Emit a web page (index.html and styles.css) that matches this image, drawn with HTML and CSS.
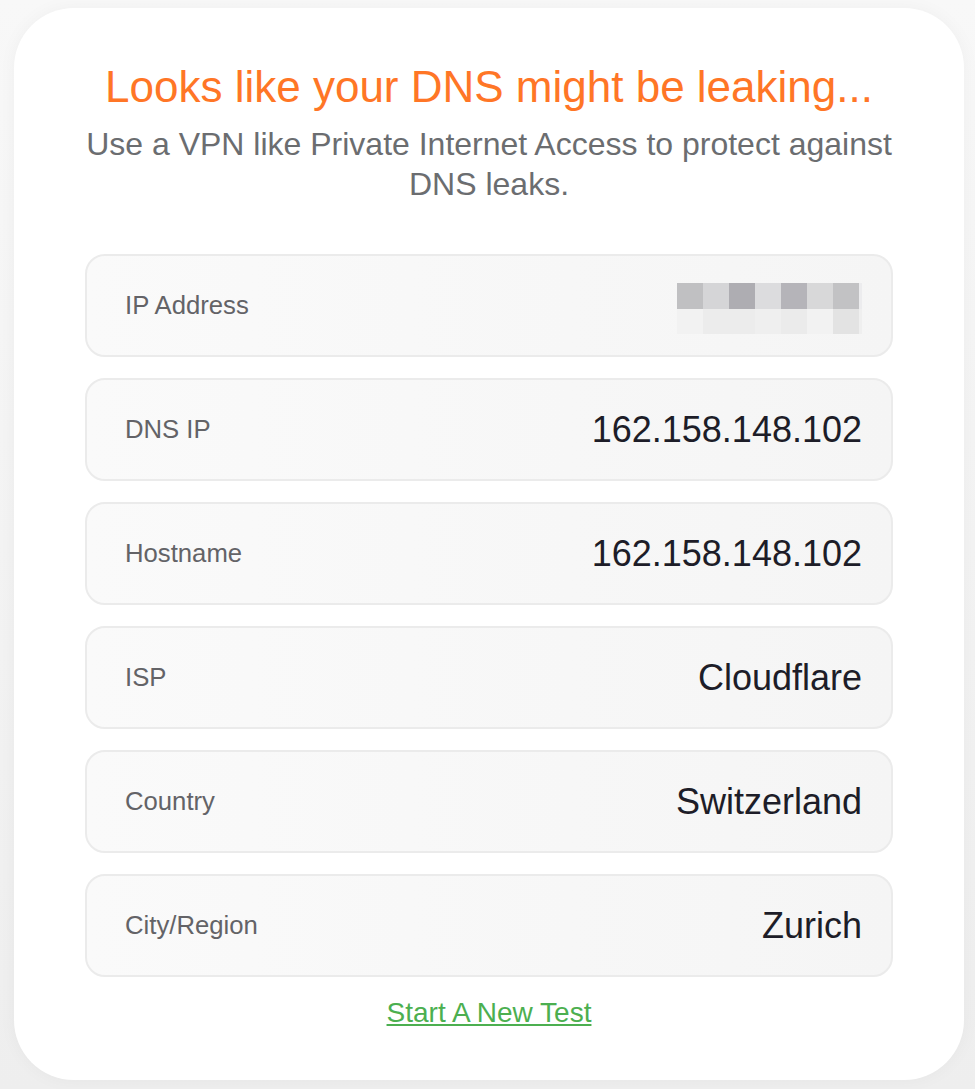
FILE: index.html
```html
<!DOCTYPE html>
<html lang="en">
<head>
<meta charset="utf-8">
<title>DNS Leak Test</title>
<link rel="stylesheet" href="styles.css">
</head>
<body>
<main class="card">
  <h1 class="title">Looks like your DNS might be leaking...</h1>
  <p class="subtitle">Use a VPN like Private Internet Access to protect against DNS leaks.</p>
  <div class="rows">
    <div class="row">
      <span class="label">IP Address</span>
      <div class="pixels" aria-label="hidden IP address">
        <span class="px"></span><span class="px"></span><span class="px"></span><span class="px"></span><span class="px"></span><span class="px"></span><span class="px"></span><span class="px"></span>
        <span class="px"></span><span class="px"></span><span class="px"></span><span class="px"></span><span class="px"></span><span class="px"></span><span class="px"></span><span class="px"></span>
      </div>
    </div>
    <div class="row">
      <span class="label">DNS IP</span>
      <span class="value">162.158.148.102</span>
    </div>
    <div class="row">
      <span class="label">Hostname</span>
      <span class="value">162.158.148.102</span>
    </div>
    <div class="row">
      <span class="label">ISP</span>
      <span class="value">Cloudflare</span>
    </div>
    <div class="row">
      <span class="label">Country</span>
      <span class="value">Switzerland</span>
    </div>
    <div class="row">
      <span class="label">City/Region</span>
      <span class="value">Zurich</span>
    </div>
  </div>
  <a class="new-test" href="#">Start A New Test</a>
</main>
</body>
</html>
```
FILE: styles.css
```css
html, body {
  margin: 0;
  padding: 0;
}
body {
  min-height: 1089px;
  box-sizing: border-box;
  padding: 8px 0 0 14px;
  background: linear-gradient(#f8f8f8, #eeeeee);
  font-family: "Liberation Sans", Arial, sans-serif;
}
.card {
  box-sizing: border-box;
  width: 950px;
  height: 1072px;
  padding: 54px 71px 51px;
  background: #ffffff;
  border-radius: 60px;
  box-shadow: 0 0 18px rgba(0, 0, 0, 0.04);
  display: flex;
  flex-direction: column;
  align-items: center;
}
.title {
  margin: 0;
  font-size: 44px;
  line-height: 50px;
  font-weight: normal;
  color: #ff7626;
  text-align: center;
  white-space: nowrap;
}
.subtitle {
  margin: 12px 0 0;
  font-size: 32px;
  line-height: 40px;
  color: #6b6d70;
  text-align: center;
  width: 820px;
}
.rows {
  margin-top: 50px;
  width: 808px;
  display: flex;
  flex-direction: column;
  gap: 21px;
}
.row {
  box-sizing: border-box;
  height: 103px;
  border: 2px solid #ebebeb;
  border-radius: 20px;
  background: linear-gradient(to right, #fafafa, #f5f5f5);
  padding: 0 29px 0 38px;
  display: flex;
  align-items: center;
  justify-content: space-between;
}
.label {
  font-size: 25.7px;
  color: #636367;
}
.value {
  font-size: 36px;
  color: #1d1d28;
}
.pixels {
  margin-top: 5px;
  display: grid;
  grid-template-columns: repeat(7, 26px) 3px;
  grid-template-rows: 26px 25px;
}
.px:nth-child(1) { background: #c0c0c2; }
.px:nth-child(2) { background: #d5d5d7; }
.px:nth-child(3) { background: #aeadb2; }
.px:nth-child(4) { background: #dcdcde; }
.px:nth-child(5) { background: #b5b4b9; }
.px:nth-child(6) { background: #d8d8d9; }
.px:nth-child(7) { background: #c2c2c4; }
.px:nth-child(8) { background: #ececee; }
.px:nth-child(9) { background: #f2f2f2; }
.px:nth-child(10) { background: #ececec; }
.px:nth-child(11) { background: #ececec; }
.px:nth-child(12) { background: #efefef; }
.px:nth-child(13) { background: #ebebeb; }
.px:nth-child(14) { background: #f2f2f2; }
.px:nth-child(15) { background: #e3e3e3; }
.px:nth-child(16) { background: #efefef; }
.new-test {
  margin-top: 20px;
  font-size: 28px;
  color: #4caf50;
  text-decoration: underline;
  text-underline-offset: 2px;
}
```
